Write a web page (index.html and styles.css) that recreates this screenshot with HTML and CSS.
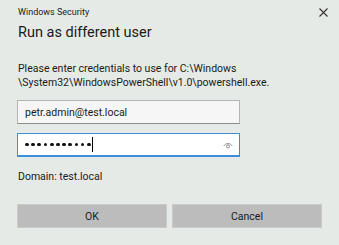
FILE: index.html
```html
<!DOCTYPE html>
<html lang="en">
<head>
  <meta charset="UTF-8" />
  <title>Windows Security</title>
  <link rel="stylesheet" href="styles.css">
</head>
<body>
  <div class="dialog">
    <div class="titlebar">
      <span class="app">Windows Security</span>
      <span class="close">
        <svg width="9" height="9" viewBox="0 0 9 9"><path d="M0.5 0.5L8.5 8.5M8.5 0.5L0.5 8.5" stroke="#333" stroke-width="1.1"/></svg>
      </span>
    </div>
    <h1>Run as different user</h1>
    <p class="desc">Please enter credentials to use for C:\Windows<br>\System32\WindowsPowerShell\v1.0\powershell.exe.</p>

    <div class="field user">petr.admin@test.local</div>
    <div class="field pass">
      <span class="dots">
        <i></i><i></i><i></i><i></i><i></i><i></i><i></i><i></i><i></i><i></i><i></i>
      </span>
      <span class="caret"></span>
      <svg class="eye" width="10" height="7" viewBox="0 0 10 7">
        <path d="M0.8 4C2.5 0.8 7.5 0.8 9.2 4" fill="none" stroke="#8a8a8a" stroke-width="1"/>
        <circle cx="5" cy="4.4" r="1.5" fill="none" stroke="#8a8a8a" stroke-width="1"/>
      </svg>
    </div>

    <p class="domain">Domain: test.local</p>

    <div class="buttons">
      <button class="btn">OK</button>
      <button class="btn">Cancel</button>
    </div>
  </div>
</body>
</html>
```

FILE: styles.css
```css
body {
  margin: 0;
  padding: 0;
  background: #e6eae6;
  font-family: Roboto, 'Open Sans', sans-serif;
  color: #1a1a1a;
}

.dialog {
  width: 305px;
  padding: 0 17px;
}

.titlebar {
  display: flex;
  justify-content: space-between;
  align-items: center;
  height: 24px;
}

.app {
  font-size: 9px;
  margin-left: 1px;
}

.close {
  display: flex;
  margin-right: -6px;
}

h1 {
  margin: 0;
  font-size: 14.5px;
  font-weight: normal;
  line-height: 18px;
  height: 38px;
  padding-left: 1px;
}

.desc {
  margin: 0;
  font-size: 10.5px;
  line-height: 14px;
  padding-left: 1px;
  height: 38px;
}

.field {
  box-sizing: border-box;
  width: 223px;
  height: 24px;
  display: flex;
  align-items: center;
  padding-left: 7px;
  font-size: 10.5px;
}

.user {
  background: #f6f6f6;
  border: 1px solid #b4b4b4;
  border-bottom: 1px solid #8c8c8c;
}

.pass {
  margin-top: 9px;
  background: #ffffff;
  border: 1px solid #3f8fd6;
  border-bottom: 2px solid #3f8fd6;
  position: relative;
}

.dots {
  display: flex;
  gap: 2.4px;
}

.dots i {
  width: 3.8px;
  height: 3.8px;
  border-radius: 50%;
  background: #111;
}

.caret {
  width: 1px;
  height: 15px;
  background: #000;
  margin-left: 1px;
}

.eye {
  position: absolute;
  right: 6px;
  top: 8px;
}

.domain {
  margin: 0;
  padding-top: 13px;
  padding-left: 1px;
  font-size: 10.5px;
  line-height: 14px;
  height: 34px;
}

.buttons {
  display: flex;
  gap: 5px;
}

.btn {
  flex: 1;
  height: 24px;
  background: #bcbcbc;
  border: 1px solid #cacaca;
  font-family: inherit;
  font-size: 10.5px;
  color: #1a1a1a;
  padding: 0;
}
```
